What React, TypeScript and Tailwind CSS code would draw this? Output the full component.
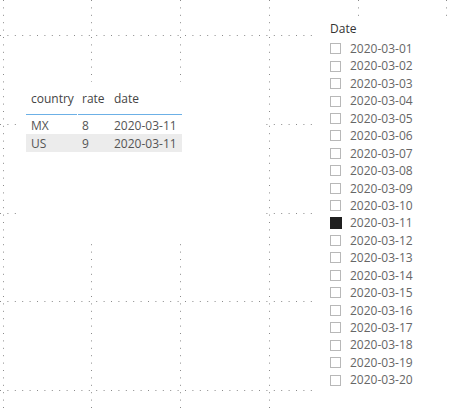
import React from "react"

const dates = Array.from({ length: 20 }, (_, i) => `2020-03-${String(i + 1).padStart(2, "0")}`)
const rows = [
  { country: "MX", rate: 8, date: "2020-03-11" },
  { country: "US", rate: 9, date: "2020-03-11" },
]

const gridX = [3, 91, 180, 269, 358, 446]
const gridY = [35, 124, 213, 301, 390]

function CanvasGrid() {
  return (
    <svg className="absolute inset-0" width="474" height="411">
      {gridX.map((x) => (
        <line key={"v" + x} x1={x + 0.5} y1={0} x2={x + 0.5} y2={411} stroke="#8a8a8a" strokeWidth="1" strokeDasharray="1 6.4" />
      ))}
      {gridY.map((y) => (
        <line key={"h" + y} x1={0} y1={y + 0.5} x2={474} y2={y + 0.5} stroke="#8a8a8a" strokeWidth="1" strokeDasharray="1 6.4" />
      ))}
    </svg>
  )
}

function TableVisual() {
  return (
    <div className="ml-[22px] mt-[82px] h-[160px] w-[240px] bg-white pl-[4px] pt-[8px] text-[12px] text-[#555]">
      {/* header */}
      <div className="flex text-[#444]">
        <div className="w-[51px] border-b border-[#6cb0e6] pb-[6px] pl-[5px] leading-[18px]">country</div>
        <div className="ml-[1px] w-[30px] border-b border-[#6cb0e6] pb-[6px] pl-[4px] leading-[18px]">rate</div>
        <div className="w-[74px] border-b border-[#6cb0e6] pb-[6px] pl-[6px] leading-[18px]">date</div>
      </div>
      {/* rows */}
      <div className="mt-[1px]">
        {rows.map((r, i) => (
          <div key={r.country} className={"flex h-[18px] w-[156px] pt-[1px] leading-[18px] " + (i % 2 === 1 ? "bg-[#ececec]" : "")}>
            <div className="w-[51px] pl-[5px]">{r.country}</div>
            <div className="w-[31px] pl-[5px]">{r.rate}</div>
            <div className="w-[74px] pl-[6px]">{r.date}</div>
          </div>
        ))}
      </div>
    </div>
  )
}

function SlicerVisual() {
  return (
    <div className="ml-[53px] mt-[17px] h-[394px] w-[159px] bg-white pl-[15px] pt-[3px] text-[12px]">
      <div className="mb-[2px] leading-[18px] text-[#333]">Date</div>
      <div>
        {dates.map((d) => {
          const checked = d === "2020-03-11"
          return (
            <div key={d} className="flex h-[17.45px] items-center gap-[9px] leading-[17.45px] text-[#666]">
              {checked ? (
                <span className="ml-[-0.5px] mr-[-1px] box-border h-[12.5px] w-[12.5px] bg-[#1f1f1f]" />
              ) : (
                <span className="box-border h-[11px] w-[11px] border border-[#b8b8b8] bg-white" />
              )}
              <span>{d}</span>
            </div>
          )
        })}
      </div>
    </div>
  )
}

export default function App() {
  return (
    <div className="relative h-[411px] w-[474px] overflow-hidden bg-white font-['Open_Sans',sans-serif]">
      <CanvasGrid />
      <div className="relative flex items-start">
        <TableVisual />
        <SlicerVisual />
      </div>
    </div>
  )
}
